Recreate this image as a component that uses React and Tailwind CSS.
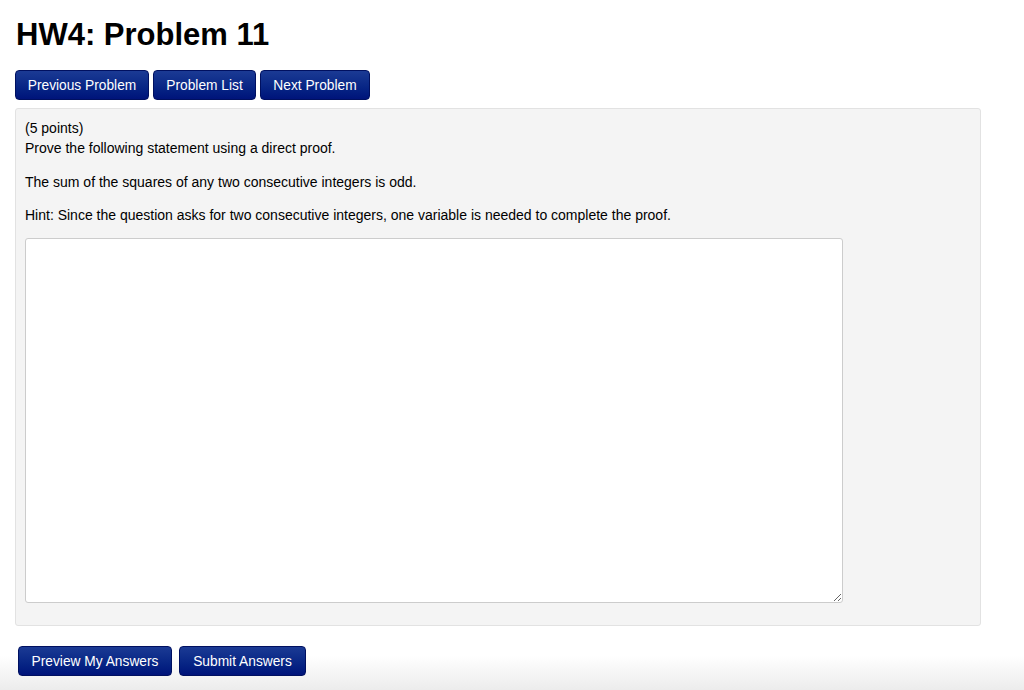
import React from 'react';

const NavButton = ({ children, className = '' }) => (
  <button
    className={`h-[30px] rounded-[4px] border border-[#001060] bg-linear-to-b from-[#1b3a94] to-[#00137a] pt-[2px] text-[13.75px] leading-none text-white ${className}`}
  >
    {children}
  </button>
);

const App = () => {
  return (
    <div
      className="h-[690px] overflow-hidden bg-linear-to-b from-white from-95% to-[#ececec] px-[15px] text-black"
      style={{ fontFamily: '"Liberation Sans", Arial, Helvetica, sans-serif' }}
    >
      {/* title */}
      <h1 className="pt-[17px] pl-px text-[31px] font-bold leading-[36px]">HW4: Problem 11</h1>

      {/* problem navigation */}
      <div className="mt-[17px] flex gap-[4px]">
        <NavButton className="w-[134px]">Previous Problem</NavButton>
        <NavButton className="w-[103px]">Problem List</NavButton>
        <NavButton className="w-[110px]">Next Problem</NavButton>
      </div>

      {/* problem body */}
      <div className="mt-[8px] w-[966px] rounded-[3px] border border-[#e2e2e2] bg-[#f4f4f4] px-[9px] pt-[9px] pb-[22px] text-[14px] leading-[20px]">
        <p>(5 points)</p>
        <p>Prove the following statement using a direct proof.</p>
        <p className="mt-[14px]">The sum of the squares of any two consecutive integers is odd.</p>
        <p className="mt-[13px]">
          Hint: Since the question asks for two consecutive integers, one variable is needed to complete the proof.
        </p>
        <textarea className="mt-[13px] block h-[365px] w-[818px] rounded-[3px] border border-[#cccccc] bg-white p-2 outline-none" />
      </div>

      {/* submit */}
      <div className="mt-[20px] ml-[3px] flex gap-[7px]">
        <NavButton className="w-[154px]">Preview My Answers</NavButton>
        <NavButton className="w-[127px]">Submit Answers</NavButton>
      </div>
    </div>
  );
};

export default App;
